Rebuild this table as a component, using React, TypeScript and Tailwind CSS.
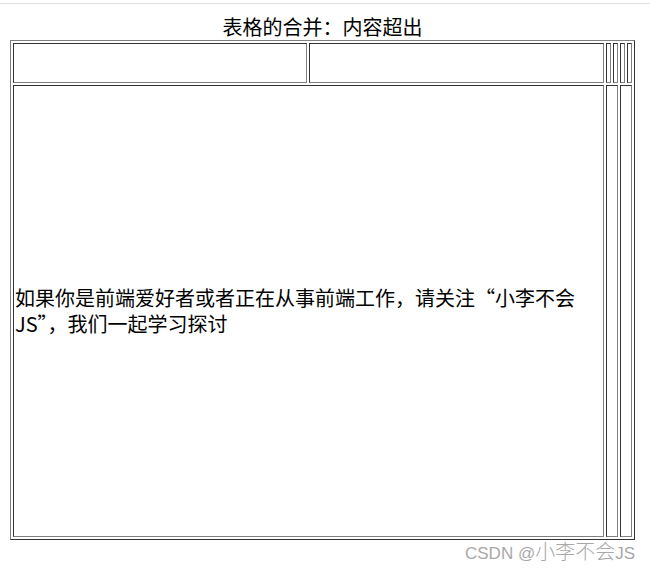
import React from "react";

const cell =
  "border border-solid border-t-[#333333] border-l-[#333333] border-r-[#808080] border-b-[#808080]";

export default function App() {
  return (
    <div
      className="w-[650px] h-[570px] bg-white text-black"
      style={{ fontFamily: '"Noto Sans CJK SC", "Noto Sans", sans-serif' }}
    >
      <div className="h-[3px]" />
      <div className="h-px bg-[#e0e0e0]" />
      <div className="h-[10px]" />
      <div className="ml-[10px] w-[625px]">
        <div className="text-center text-[20px] leading-[26px]">表格的合并：内容超出</div>
        <div className="grid grid-cols-[294px_295px_5px_5px_5px_5px] grid-rows-[40px_452px] gap-[2px] p-[2px] border border-solid border-t-[#808080] border-l-[#808080] border-r-[#333333] border-b-[#333333]">
          <div className={cell} />
          <div className={cell} />
          <div className={cell} />
          <div className={cell} />
          <div className={cell} />
          <div className={cell} />
          <div className={`${cell} col-span-2 flex items-center p-px text-[20px] leading-[26px]`}>
            <span>如果你是前端爱好者或者正在从事前端工作，请关注“小李不会JS”，我们一起学习探讨</span>
          </div>
          <div className={`${cell} col-span-2`} />
          <div className={`${cell} col-span-2`} />
        </div>
      </div>
      <div
        className="pr-[15px] pt-[1px] text-right text-[17px] leading-[22px] text-[#a8a8a8]"
        style={{ fontFamily: '"Liberation Sans", "Noto Sans CJK SC", sans-serif' }}
      >
        CSDN @<span className="text-[20px] font-light">小李不会</span>JS
      </div>
    </div>
  );
}
